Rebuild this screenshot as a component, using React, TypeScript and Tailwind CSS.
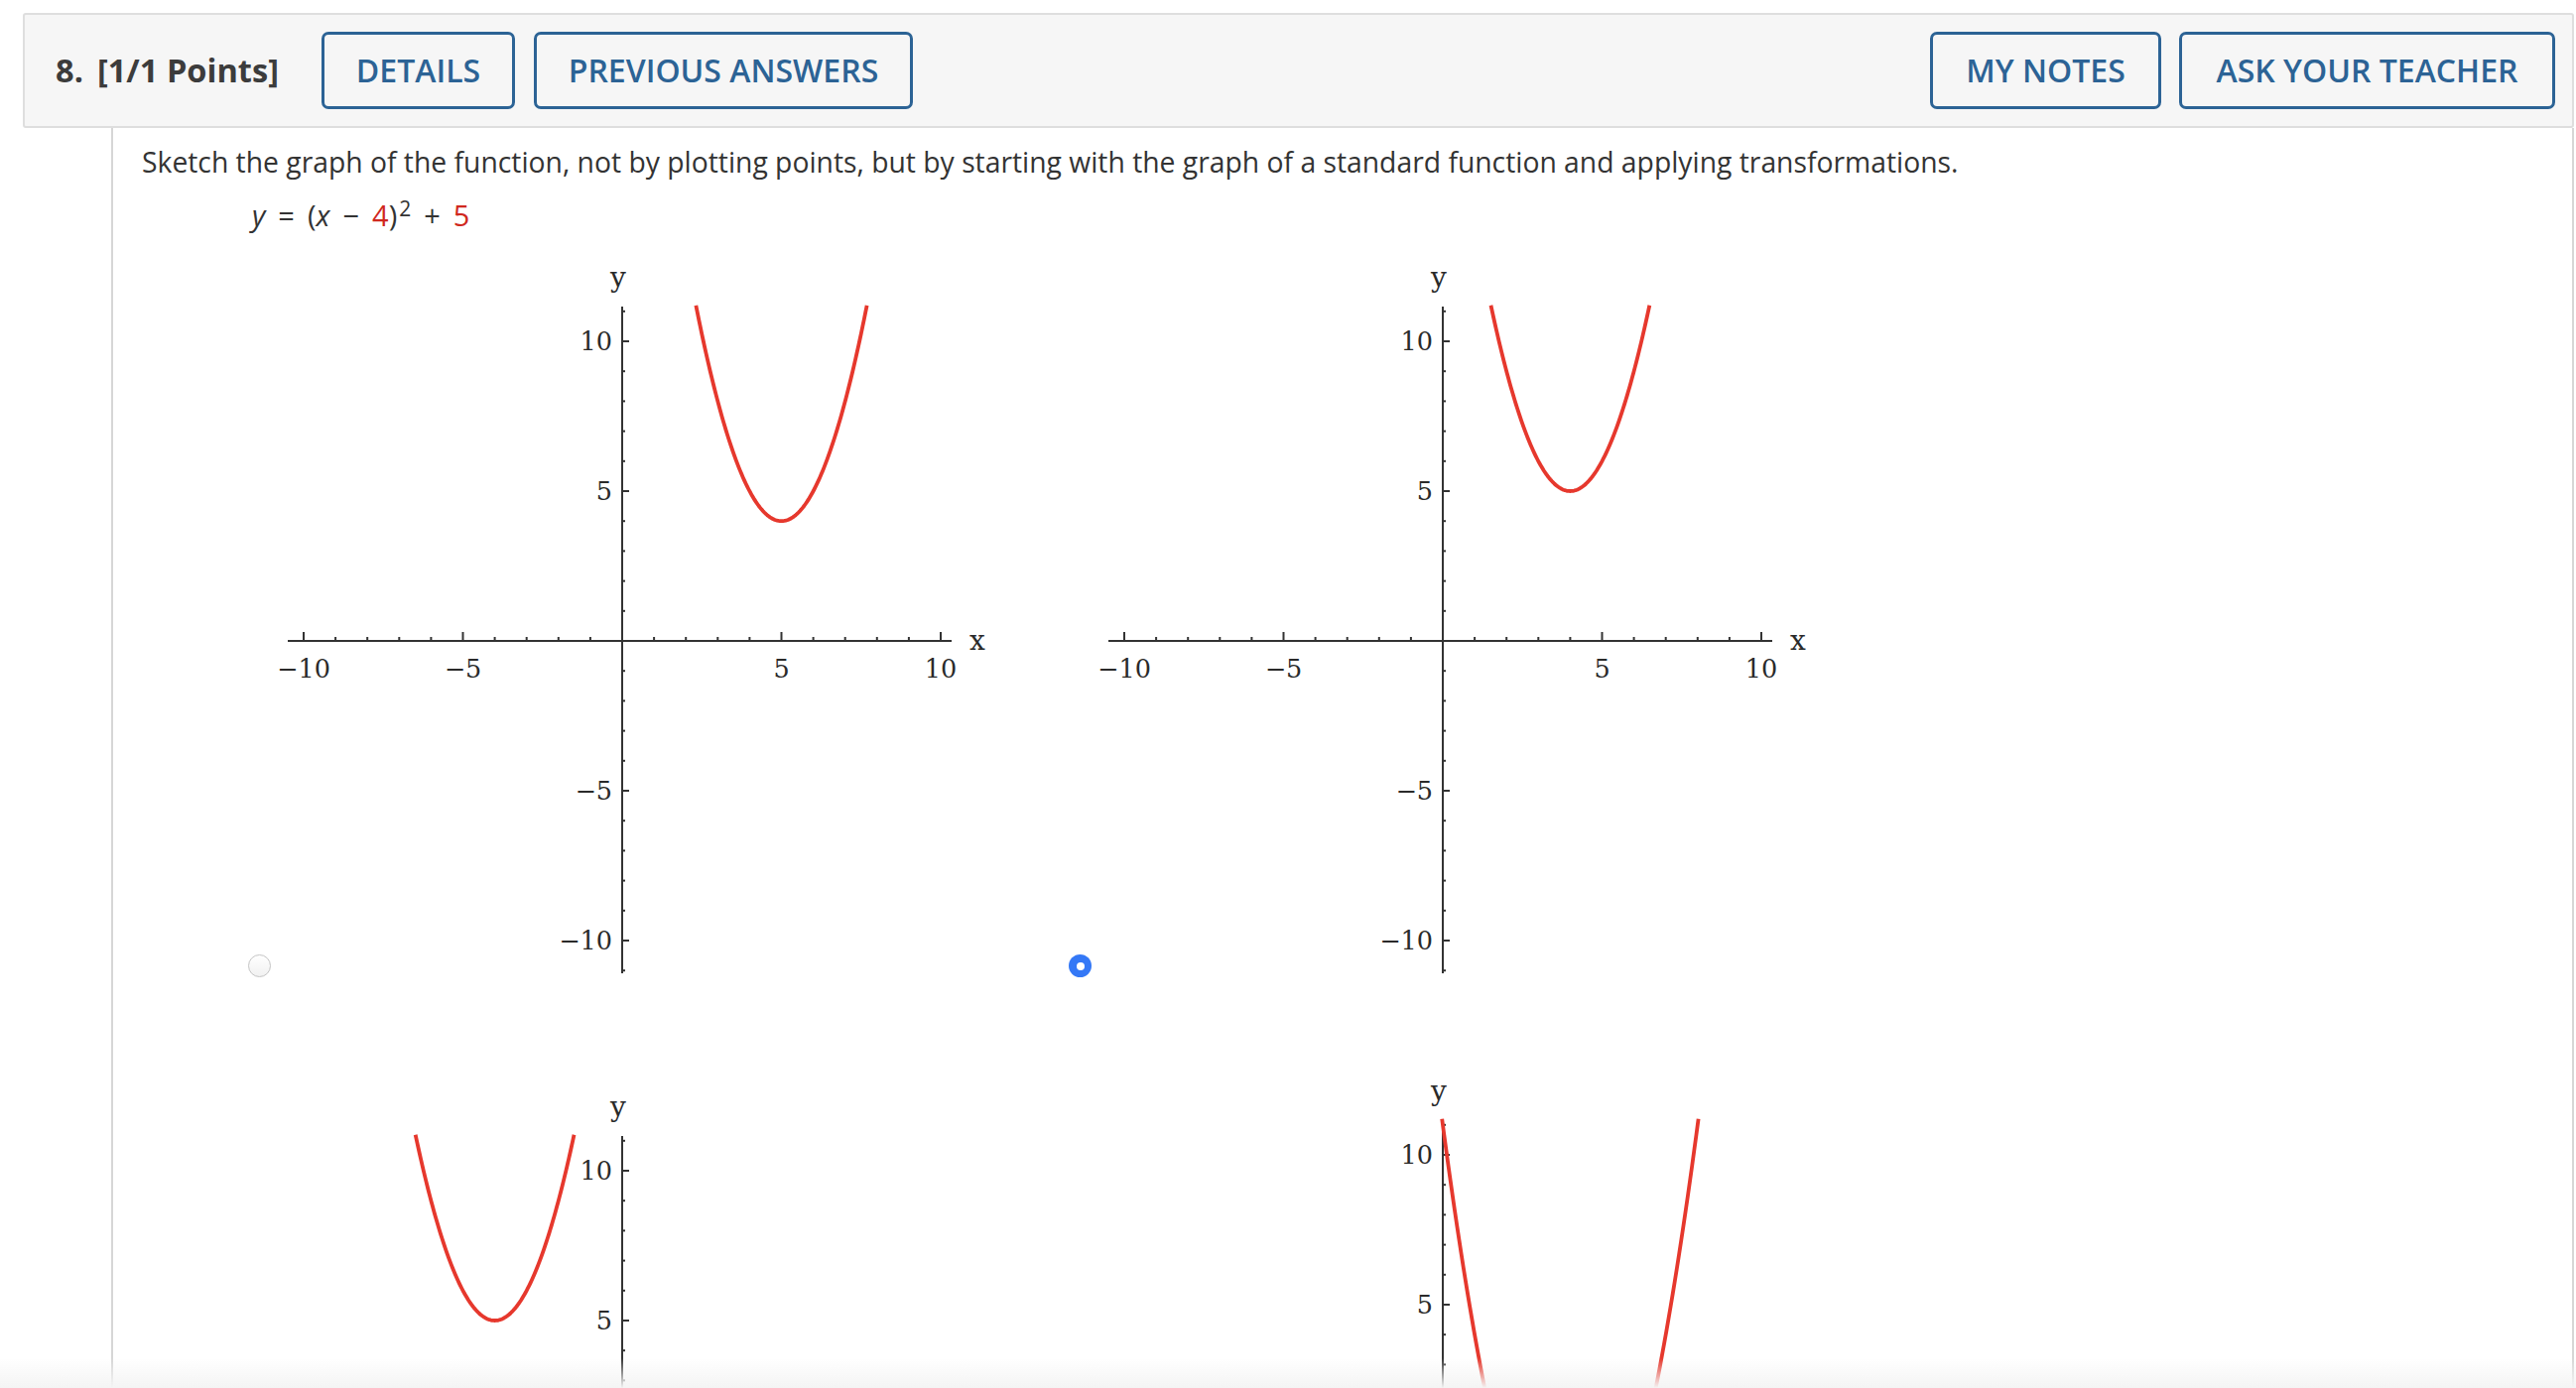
import React from "react";

const UX = 32.1;
const UY = 30.2;
const YMAX = 11.2;

function Graph({ ox, oy, h, k }: { ox: number; oy: number; h: number; k: number }) {
  const px = (x: number) => ox + x * UX;
  const py = (y: number) => oy - y * UY;
  const half = Math.sqrt(YMAX - k);
  const x0 = h - half;
  const x1 = h + half;
  const pts: string[] = [];
  const n = 120;
  for (let i = 0; i <= n; i++) {
    const x = x0 + ((x1 - x0) * i) / n;
    const y = (x - h) * (x - h) + k;
    pts.push(`${px(x).toFixed(2)},${py(y).toFixed(2)}`);
  }
  const ticks: number[] = [];
  for (let i = -10; i <= 10; i++) if (i !== 0) ticks.push(i);
  const yTicks: number[] = [];
  for (let i = -11; i <= 11; i++) if (i !== 0) yTicks.push(i);
  const font = { fontFamily: '"DejaVu Serif", "Liberation Serif", serif' };
  const lbl = (v: number) => (v < 0 ? `\u2212${Math.abs(v)}` : `${v}`);
  return (
    <svg width={740} height={720} className="overflow-visible block shrink-0" style={font}>
      <line x1={ox - 337} y1={oy} x2={ox + 332} y2={oy} stroke="#333" strokeWidth={2} />
      {ticks.map((t) => (
        <line
          key={`xt${t}`}
          x1={px(t)}
          x2={px(t)}
          y1={oy}
          y2={oy - (t % 5 === 0 ? 9 : 4)}
          stroke="#333"
          strokeWidth={2}
        />
      ))}
      <line x1={ox} y1={oy - 337} x2={ox} y2={oy + 335} stroke="#333" strokeWidth={2} />
      {yTicks.map((t) => (
        <line
          key={`yt${t}`}
          x1={ox}
          x2={ox + (t % 5 === 0 ? 7 : 3)}
          y1={py(t)}
          y2={py(t)}
          stroke="#333"
          strokeWidth={2}
        />
      ))}
      {[-10, -5, 5, 10].map((v) => (
        <text key={`xl${v}`} x={px(v)} y={oy + 37} textAnchor="middle" fontSize={25.5} fill="#2a2a2a">
          {lbl(v)}
        </text>
      ))}
      {[-10, -5, 5, 10].map((v) => (
        <text key={`yl${v}`} x={ox - 10} y={py(v) + 9} textAnchor="end" fontSize={25.5} fill="#2a2a2a">
          {lbl(v)}
        </text>
      ))}
      <text x={ox - 4} y={oy - 363 + 6} textAnchor="middle" fontSize={28} fill="#2a2a2a">
        y
      </text>
      <text x={ox + 358} y={oy + 9} textAnchor="middle" fontSize={28} fill="#2a2a2a">
        x
      </text>
      <polyline points={pts.join(" ")} fill="none" stroke="#e6382d" strokeWidth={3.8} strokeLinejoin="round" />
    </svg>
  );
}

function Radio({ selected }: { selected?: boolean }) {
  if (selected) {
    return (
      <div className="w-[23px] h-[23px] rounded-full bg-[#3478f6] flex items-center justify-center shrink-0">
        <div className="w-[8px] h-[8px] rounded-full bg-white" />
      </div>
    );
  }
  return (
    <div className="w-[23px] h-[23px] rounded-full border border-[#c4c4c4] bg-gradient-to-b from-white to-[#f1f1f1] shrink-0" />
  );
}

function Btn({ w, children }: { w: string; children: React.ReactNode }) {
  return (
    <div
      className={`${w} h-[78px] border-[3px] border-[#2c6395] rounded-[7px] flex items-center justify-center text-[#2c6395] text-[32px] font-semibold`}
    >
      {children}
    </div>
  );
}

export default function App() {
  return (
    <div
      className="min-h-screen bg-white pt-[13px] pl-[23px] pr-[2px] overflow-hidden"
      style={{ fontFamily: '"Open Sans", "Noto Sans", sans-serif' }}
    >
      <div className="h-[116px] border-2 border-[#dedede] bg-[#f6f6f6] rounded-[3px] flex items-center pl-[31px] pr-[17px]">
        <div className="text-[32.6px] font-bold text-[#3c3c3c] mr-[43px] whitespace-nowrap">
          <span>8.</span>
          <span className="ml-[14px]">[1/1 Points]</span>
        </div>
        <div className="flex gap-[19px]">
          <Btn w="w-[195px]">DETAILS</Btn>
          <Btn w="w-[382px]">PREVIOUS ANSWERS</Btn>
        </div>
        <div className="flex-1" />
        <div className="flex gap-[18px]">
          <Btn w="w-[233px]">MY NOTES</Btn>
          <Btn w="w-[379px]">ASK YOUR TEACHER</Btn>
        </div>
      </div>
      <div className="ml-[89px] border-l-2 border-r-2 border-[#d6d6d6] pl-[29px] pt-[15px] min-h-[1300px]">
        <p className="text-[28.3px] leading-[38px] text-[#333] whitespace-nowrap">
          Sketch the graph of the function, not by plotting points, but by starting with the graph of a standard
          function and applying transformations.
        </p>
        <p className="mt-[16px] ml-[111px] text-[29px] leading-[38px] text-[#333] whitespace-nowrap">
          <i>y</i>
          <span className="mx-[13px]">=</span>(<i>x</i>
          <span className="mx-[13px]">−</span>
          <span className="text-[#d0281e]">4</span>)<sup className="text-[21px] ml-[2px]">2</sup>
          <span className="mx-[13px]">+</span>
          <span className="text-[#d0281e]">5</span>
        </p>
        <div className="mt-[29px] ml-[107px] grid grid-cols-[827px_827px] gap-y-[116px]">
          <div className="flex items-end gap-[2px]">
            <Radio />
            <Graph ox={352} oy={381} h={5} k={4} />
          </div>
          <div className="flex items-end gap-[2px]">
            <Radio selected />
            <Graph ox={352} oy={381} h={4} k={5} />
          </div>
          <div className="flex items-end gap-[2px]">
            <Radio />
            <Graph ox={352} oy={381} h={-4} k={5} />
          </div>
          <div className="flex items-end gap-[2px]">
            <Radio />
            <Graph ox={352} oy={365} h={4} k={-5} />
          </div>
        </div>
      </div>
      <div className="fixed left-0 right-0 bottom-0 h-[30px] pointer-events-none bg-gradient-to-b from-transparent to-[#f4f4f4]" />
    </div>
  );
}
